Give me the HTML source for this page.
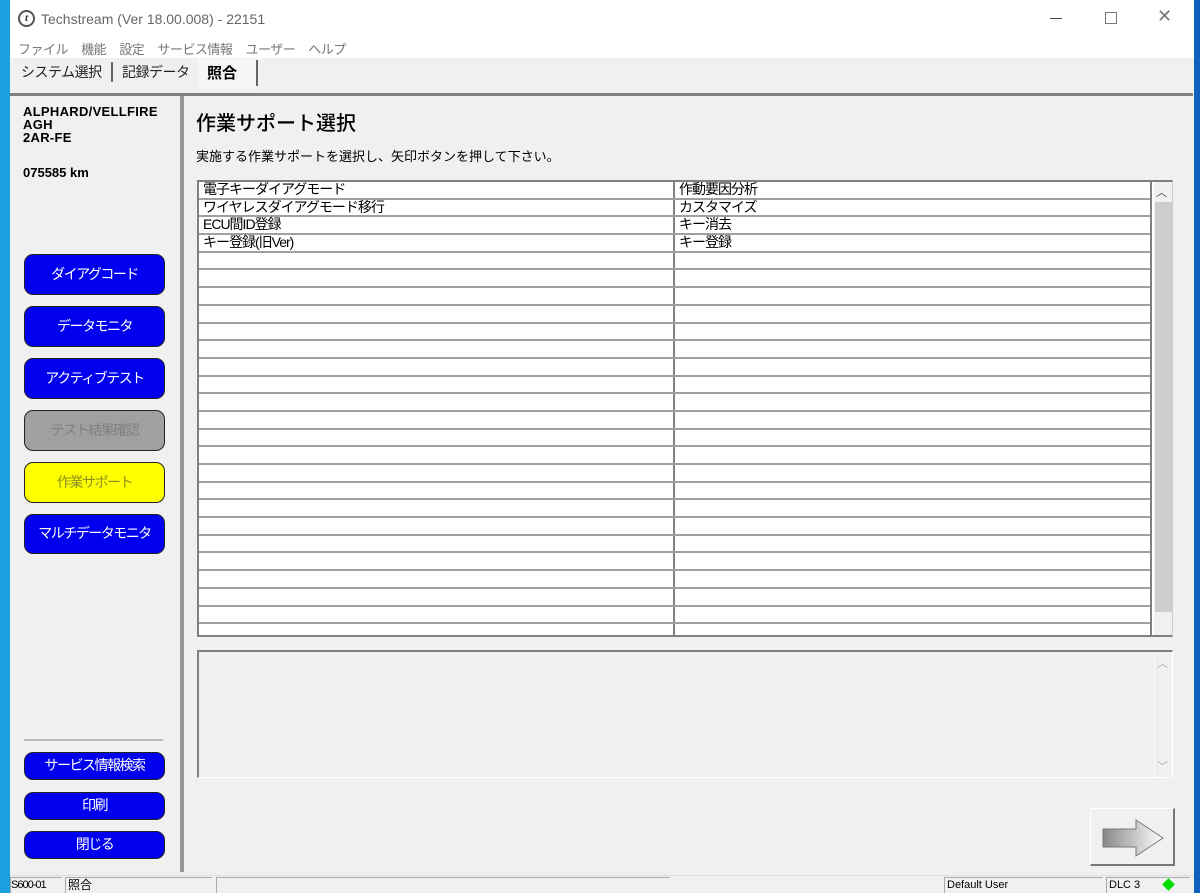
<!DOCTYPE html>
<html><head><meta charset="utf-8"><style>
*{box-sizing:border-box;margin:0;padding:0}
body{width:1200px;height:893px;position:relative;overflow:hidden;background:#f0f0f0;font-family:"Liberation Sans","Noto Sans CJK JP",sans-serif;color:#000}
.a{position:absolute}
.btn{position:absolute;left:24px;width:141px;border:1px solid #222;border-radius:9px;background:#0000ee;color:#fff;font-size:14px;text-align:center;letter-spacing:-1.5px}
.row{height:17.7px;border-bottom:2px solid #a0a0a0;display:flex;font-size:14px;line-height:15px;letter-spacing:-1px}
.row div{padding-left:4px}
.row .c1{width:476px;border-right:2px solid #808080}
</style></head><body>
<div class="a" style="left:0;top:0;width:10px;height:893px;background:#1aa0e0"></div>
<div class="a" style="left:1194px;top:0;width:6px;height:893px;background:#1060c0"></div>
<div class="a" style="left:10px;top:0;width:1184px;height:58px;background:#fff"></div>
<div class="a" style="left:18px;top:10px;width:17px;height:17px;border:2px solid #555;border-radius:50%;font:italic bold 11px 'Liberation Serif',serif;text-align:center;line-height:13px;color:#333">t</div>
<div class="a" style="left:41px;top:11px;font-size:14px;color:#666">Techstream (Ver 18.00.008) - 22151</div>
<div class="a" style="left:1050px;top:18px;width:12px;height:1px;background:#555"></div>
<div class="a" style="left:1105px;top:12px;width:12px;height:12px;border:1px solid #777"></div>
<div class="a" style="left:1157px;top:6px;font-size:18px;color:#777">✕</div>
<div class="a" style="left:18px;top:39px;font-size:13px;color:#777;word-spacing:10px;letter-spacing:-0.5px">ファイル 機能 設定 サービス情報 ユーザー ヘルプ</div>
<div class="a" style="left:10px;top:58px;width:1184px;height:35px;background:#f0f0f0"></div>
<div class="a" style="left:21px;top:62px;font-size:14px;color:#222;letter-spacing:-0.5px">システム選択</div>
<div class="a" style="left:111px;top:62px;width:2px;height:20px;background:#666"></div>
<div class="a" style="left:122px;top:62px;font-size:14px;color:#222;letter-spacing:-0.5px">記録データ</div>
<div class="a" style="left:198px;top:59px;width:60px;height:30px;background:#f6f6f6"></div>
<div class="a" style="left:207px;top:62px;font-size:15px;font-weight:bold">照合</div>
<div class="a" style="left:256px;top:60px;width:2px;height:26px;background:#666"></div>
<div class="a" style="left:10px;top:93px;width:1183px;height:3px;background:#808080"></div>
<div class="a" style="left:180px;top:96px;width:4px;height:776px;background:#999"></div>
<div class="a" style="left:23px;top:105px;font-size:13px;font-weight:bold;line-height:13px;letter-spacing:0.3px">ALPHARD/VELLFIRE<br>AGH<br>2AR-FE</div>
<div class="a" style="left:23px;top:165px;font-size:13px;font-weight:bold">075585 km</div>
<div class="btn" style="top:254px;height:41px;line-height:38px">ダイアグコード</div>
<div class="btn" style="top:306px;height:41px;line-height:38px">データモニタ</div>
<div class="btn" style="top:358px;height:41px;line-height:38px">アクティブテスト</div>
<div class="btn" style="top:410px;height:41px;line-height:38px;background:#a0a0a0;color:#808080">テスト結果確認</div>
<div class="btn" style="top:462px;height:41px;line-height:38px;background:#ffff00;color:#909020">作業サポート</div>
<div class="btn" style="top:514px;height:40px;line-height:37px">マルチデータモニタ</div>
<div class="a" style="left:24px;top:739px;width:139px;height:2px;background:#bbb"></div>
<div class="btn" style="top:752px;height:28px;line-height:25px">サービス情報検索</div>
<div class="btn" style="top:792px;height:28px;line-height:25px">印刷</div>
<div class="btn" style="top:831px;height:28px;line-height:25px">閉じる</div>
<div class="a" style="left:196px;top:107px;font-size:20px;font-weight:500">作業サポート選択</div>
<div class="a" style="left:196px;top:146px;font-size:13px">実施する作業サポートを選択し、矢印ボタンを押して下さい。</div>
<div class="a" style="left:197px;top:180px;width:976px;height:457px;border:2px solid #808080;border-right:1px solid #ccc;background:#fff"></div>
<div class="a" style="left:199px;top:182px;width:953px;height:453px;border-right:2px solid #808080;overflow:hidden;background:#fff">
<div class="row"><div class="c1">電子キーダイアグモード</div><div>作動要因分析</div></div>
<div class="row"><div class="c1">ワイヤレスダイアグモード移行</div><div>カスタマイズ</div></div>
<div class="row"><div class="c1">ECU間ID登録</div><div>キー消去</div></div>
<div class="row"><div class="c1">キー登録(旧Ver)</div><div>キー登録</div></div>
<div class="row"><div class="c1"></div><div></div></div><div class="row"><div class="c1"></div><div></div></div><div class="row"><div class="c1"></div><div></div></div><div class="row"><div class="c1"></div><div></div></div><div class="row"><div class="c1"></div><div></div></div><div class="row"><div class="c1"></div><div></div></div><div class="row"><div class="c1"></div><div></div></div><div class="row"><div class="c1"></div><div></div></div><div class="row"><div class="c1"></div><div></div></div><div class="row"><div class="c1"></div><div></div></div><div class="row"><div class="c1"></div><div></div></div><div class="row"><div class="c1"></div><div></div></div><div class="row"><div class="c1"></div><div></div></div><div class="row"><div class="c1"></div><div></div></div><div class="row"><div class="c1"></div><div></div></div><div class="row"><div class="c1"></div><div></div></div><div class="row"><div class="c1"></div><div></div></div><div class="row"><div class="c1"></div><div></div></div><div class="row"><div class="c1"></div><div></div></div><div class="row"><div class="c1"></div><div></div></div><div class="row"><div class="c1"></div><div></div></div><div class="row"><div class="c1"></div><div></div></div>
</div>
<div class="a" style="left:1154px;top:182px;width:18px;height:453px;background:#f0f0f0"></div>
<div class="a" style="left:1156px;top:184px;font-size:11px;color:#444">︿</div>
<div class="a" style="left:1155px;top:202px;width:17px;height:410px;background:#cdcdcd"></div>
<div class="a" style="left:197px;top:650px;width:976px;height:128px;border-top:2px solid #808080;border-left:2px solid #808080;border-right:1px solid #fff;border-bottom:1px solid #fff;background:#f0f0f0"></div>
<div class="a" style="left:1154px;top:652px;width:1px;height:125px;background:#fafafa"></div>
<div class="a" style="left:1157px;top:655px;font-size:11px;color:#aaa">︿</div>
<div class="a" style="left:1157px;top:758px;font-size:11px;color:#aaa">﹀</div>
<div class="a" style="left:1090px;top:808px;width:85px;height:58px;border-top:1px solid #fff;border-left:1px solid #fff;border-right:2px solid #777;border-bottom:2px solid #777;background:#f0f0f0">
<svg width="85" height="58" style="position:absolute;left:0;top:0"><defs><linearGradient id="g" x1="0" x2="1"><stop offset="0" stop-color="#888"/><stop offset="1" stop-color="#fff"/></linearGradient></defs>
<path d="M12 20 H45 V11 L72 29 L45 47 V38 H12 Z" fill="url(#g)" stroke="#777" stroke-width="1"/></svg></div>
<div class="a" style="left:10px;top:875px;width:1184px;height:18px;background:#f0f0f0;border-top:1px solid #ddd"></div>
<div class="a" style="left:10px;top:877px;width:52px;height:16px;border-top:1px solid #aaa;border-left:1px solid #aaa;font-size:11px;line-height:15px;letter-spacing:-1px">S600-01</div>
<div class="a" style="left:65px;top:877px;width:147px;height:16px;border-top:1px solid #aaa;border-left:1px solid #aaa;font-size:12px;line-height:15px;padding-left:2px">照合</div>
<div class="a" style="left:216px;top:877px;width:454px;height:16px;border-top:1px solid #aaa;border-left:1px solid #aaa"></div>
<div class="a" style="left:944px;top:877px;width:159px;height:16px;border-top:1px solid #aaa;border-left:1px solid #aaa;font-size:11px;line-height:15px;padding-left:2px">Default User</div>
<div class="a" style="left:1106px;top:877px;width:84px;height:16px;border-top:1px solid #aaa;border-left:1px solid #aaa;font-size:11px;line-height:15px;padding-left:2px">DLC 3</div>
<div class="a" style="left:1164px;top:880px;width:9px;height:9px;background:#00e000;transform:rotate(45deg)"></div>
</body></html>
